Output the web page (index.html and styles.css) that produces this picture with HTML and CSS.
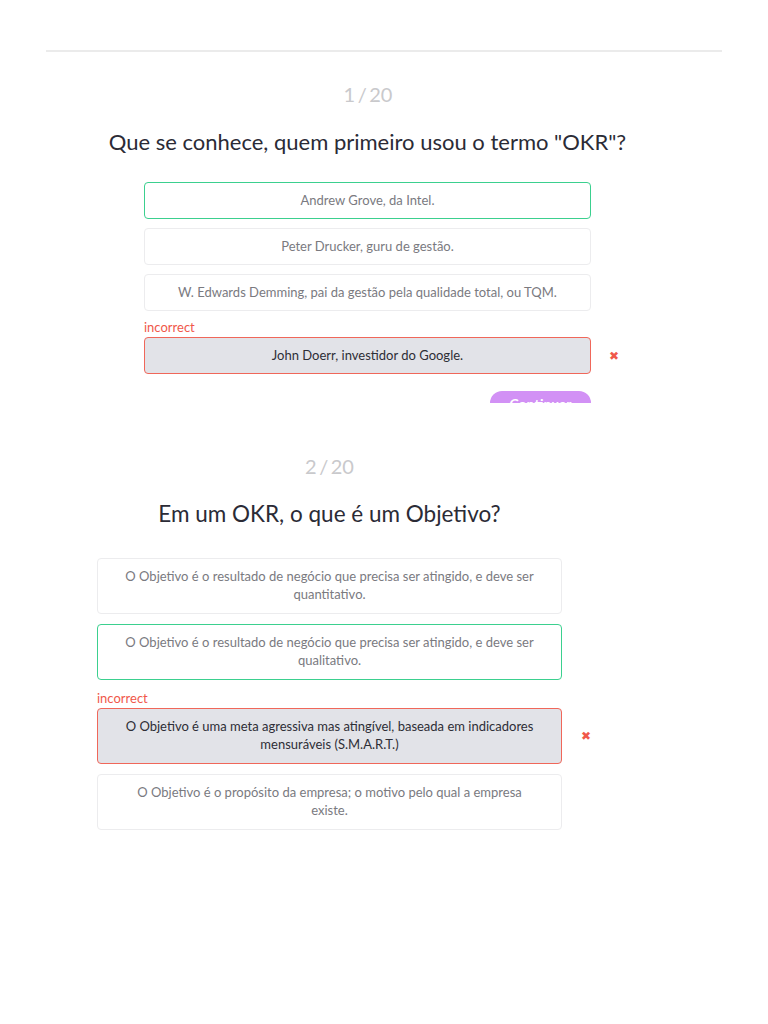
FILE: index.html
```html
<!DOCTYPE html>
<html lang="pt">
<head>
<meta charset="utf-8">
<title>Quiz OKR</title>
<link rel="stylesheet" href="styles.css">
</head>
<body>
<div class="page">
  <hr class="divider">

  <section class="quiz quiz-one">
    <div class="counter">1&thinsp;/&thinsp;20</div>
    <div class="block">
      <h2 class="question">Que se conhece, quem primeiro usou o termo "OKR"?</h2>
      <div class="options">
        <div class="row"><div class="option correct">Andrew Grove, da Intel.</div></div>
        <div class="row"><div class="option">Peter Drucker, guru de gestão.</div></div>
        <div class="row"><div class="option">W. Edwards Demming, pai da gestão pela qualidade total, ou TQM.</div></div>
        <div class="label">incorrect</div>
        <div class="row">
          <div class="option wrong">John Doerr, investidor do Google.</div>
          <span class="mark">✖</span>
        </div>
      </div>
      <div class="actions"><button class="continue">Continuar</button></div>
    </div>
  </section>

  <section class="quiz quiz-two">
    <div class="block">
      <div class="counter">2&thinsp;/&thinsp;20</div>
      <h2 class="question">Em um OKR, o que é um Objetivo?</h2>
      <div class="options">
        <div class="row"><div class="option tall">O Objetivo é o resultado de negócio que precisa ser atingido, e deve ser quantitativo.</div></div>
        <div class="row"><div class="option tall correct">O Objetivo é o resultado de negócio que precisa ser atingido, e deve ser qualitativo.</div></div>
        <div class="label">incorrect</div>
        <div class="row">
          <div class="option tall wrong">O Objetivo é uma meta agressiva mas atingível, baseada em indicadores mensuráveis (S.M.A.R.T.)</div>
          <span class="mark">✖</span>
        </div>
        <div class="row"><div class="option tall">O Objetivo é o propósito da empresa; o motivo pelo qual a empresa existe.</div></div>
      </div>
    </div>
  </section>
</div>
</body>
</html>
```

FILE: styles.css
```css
* { box-sizing: border-box; }

html, body {
  margin: 0;
  padding: 0;
  background: #ffffff;
}

body {
  font-family: Lato, "Open Sans", "Liberation Sans", sans-serif;
  color: #2c2c38;
}

.page {
  width: 768px;
  height: 1024px;
  padding-top: 50px;
}

.divider {
  margin: 0 46px;
  border: 0;
  height: 2px;
  background: #ebebeb;
}

.counter {
  text-align: center;
  font-size: 20px;
  line-height: 24px;
  color: #c9c9cc;
}

.question {
  margin: 0;
  text-align: center;
  font-weight: 400;
  font-size: 22px;
  line-height: 28px;
  color: #2b2b36;
  white-space: nowrap;
}

.quiz-one {
  padding-top: 30px;
  height: 351px;
  overflow: hidden;
}

.quiz-one .counter {
  padding-right: 32px;
}

.quiz-one .block {
  margin-left: 144px;
  width: 447px;
}

.quiz-one .question {
  margin-top: 22px;
  margin-left: -40px;
  margin-right: -40px;
}

.options {
  margin-top: 26px;
  display: flex;
  flex-direction: column;
  gap: 9px;
}

.quiz-two .options {
  margin-top: 30px;
  gap: 10px;
}

.row {
  position: relative;
  display: flex;
  align-items: center;
}

.option {
  flex: 1;
  min-height: 37px;
  padding: 9px 12px;
  border: 1px solid #ececee;
  border-radius: 4px;
  background: #ffffff;
  text-align: center;
  font-size: 13px;
  line-height: 17px;
  color: #7a7a7f;
}

.option.tall {
  min-height: 56px;
  padding: 8px 20px;
  line-height: 18px;
}

.option.correct {
  border-color: #3bd08f;
}

.option.wrong {
  border-color: #f0675a;
  background: #e2e3e8;
  color: #2e2e36;
}

.label {
  margin-top: -1px;
  margin-bottom: -7px;
  font-size: 13px;
  line-height: 16px;
  color: #f0584a;
}

.quiz-two .label {
  margin-top: 0;
  margin-bottom: -8px;
}

.mark {
  position: absolute;
  right: -28px;
  top: 50%;
  transform: translateY(-50%);
  font-size: 12px;
  line-height: 12px;
  color: #f0584a;
}

.quiz-two .mark {
  right: -29px;
}

.actions {
  display: flex;
  justify-content: flex-end;
  margin-top: 17px;
}

.continue {
  width: 101px;
  height: 30px;
  border: 0;
  border-radius: 12px;
  background: #d291f5;
  color: #ffffff;
  font-family: Lato, "Open Sans", sans-serif;
  font-weight: 700;
  font-size: 14px;
  line-height: 18px;
  padding: 4px 0 0;
  display: flex;
  justify-content: center;
  align-items: flex-start;
}

.quiz-two {
  padding-top: 51px;
}

.quiz-two .block {
  margin-left: 97px;
  width: 465px;
}

.quiz-two .question {
  margin-top: 22px;
  font-size: 22.5px;
}
```
